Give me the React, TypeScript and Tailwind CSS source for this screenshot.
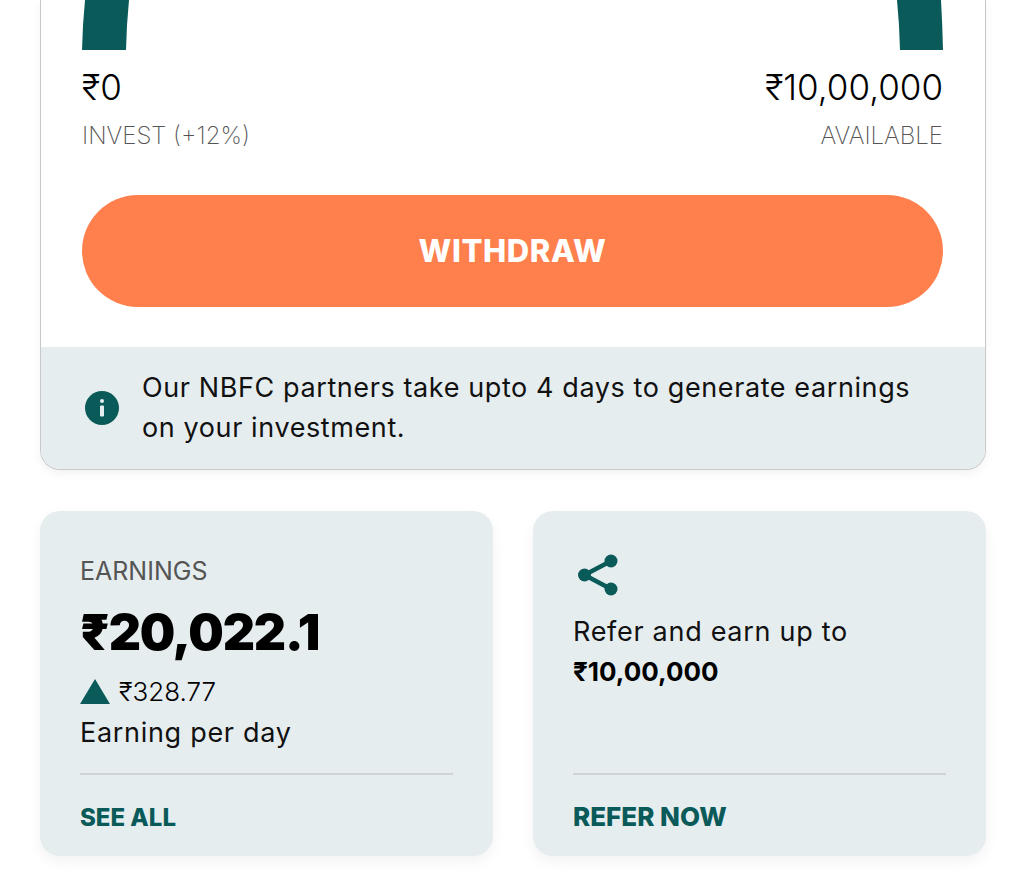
import React from "react";

const teal = "#0b5a5a";

function GaugeEnds() {
  return (
    <svg width="861" height="50" viewBox="0 0 861 50" className="block" aria-hidden="true">
      <path d="M3 0 Q0.6 24 0 50 L44 50 Q44.6 24 47 0 Z" fill={teal} />
      <path d="M815 0 Q817.4 24 818 50 L861 50 Q860.4 24 859 0 Z" fill={teal} />
    </svg>
  );
}

function InfoIcon() {
  return (
    <svg width="34" height="34" viewBox="0 0 34 34" className="shrink-0" aria-hidden="true">
      <circle cx="17" cy="17" r="17" fill={teal} />
      <rect x="15" y="8" width="4" height="4" rx="2" fill="#e6edef" />
      <rect x="15" y="14.5" width="4" height="11" rx="1" fill="#e6edef" />
    </svg>
  );
}

function ShareIcon() {
  return (
    <svg width="40" height="42" viewBox="0 0 40 42" className="block" aria-hidden="true">
      <path d="M33 7 L6.5 21 L33 35" fill="none" stroke={teal} strokeWidth="4.5" />
      <circle cx="33" cy="7" r="6.5" fill={teal} />
      <circle cx="6.5" cy="21" r="6.5" fill={teal} />
      <circle cx="33" cy="35" r="6.5" fill={teal} />
    </svg>
  );
}

export default function App() {
  return (
    <div className="h-[874px] w-[1024px] overflow-hidden bg-white pr-[38px] pl-10 font-['Inter','Noto_Sans',sans-serif] text-black">
      <section className="overflow-hidden rounded-b-[20px] border-x border-b border-[#c9c9cc] bg-white shadow-[0_4px_10px_rgba(0,0,0,0.05)]">
        <div className="pr-[41px] pl-[41px]">
          <GaugeEnds />
          <div className="mt-[15px] flex justify-between pr-px">
            <div>
              <div className="text-[35px] leading-[44px] font-light">₹0</div>
              <div className="mt-[9px] text-[24px] leading-[36px] font-extralight text-[#555]">INVEST (+12%)</div>
            </div>
            <div className="text-right">
              <div className="text-[35px] leading-[44px] font-light">₹10,00,000</div>
              <div className="mt-[9px] text-[24px] leading-[36px] font-extralight text-[#555]">AVAILABLE</div>
            </div>
          </div>
          <button className="mt-[41px] mb-10 flex h-[112px] w-[861px] items-center justify-center rounded-full bg-[#ff7f4d] text-[31px] font-extrabold tracking-[0.6px] text-white">
            WITHDRAW
          </button>
        </div>
        <div className="flex h-[122px] items-center gap-[23px] bg-[#e6edef] pr-[72px] pl-[44px]">
          <InfoIcon />
          <p className="text-[27px] leading-[40px] tracking-[0.6px] text-[#111]">
            Our NBFC partners take upto 4 days to generate earnings on your investment.
          </p>
        </div>
      </section>

      <div className="mt-[41px] grid grid-cols-2 gap-10">
        <div className="flex h-[345px] flex-col rounded-[20px] bg-[#e6edef] px-10 pt-[40px] shadow-[0_6px_14px_rgba(0,0,0,0.05)]">
          <div className="text-[25px] leading-[40px] text-[#555]">EARNINGS</div>
          <div className="mt-[5px] text-[50px] leading-[72px] font-black tracking-[-1.2px]">₹20,022.1</div>
          <div className="mt-[4px] flex items-center gap-[9px] text-[26px] leading-[40px] font-light">
            <svg width="30" height="26" viewBox="0 0 30 26" aria-hidden="true">
              <path d="M15 0 L30 25 L0 25 Z" fill={teal} />
            </svg>
            ₹328.77
          </div>
          <div className="mt-px text-[27px] leading-[40px] tracking-[0.7px] text-[#111]">Earning per day</div>
          <div className="mt-[20px] border-t-2 border-[#cfd3d6]" />
          <div className="mt-[23px] text-[24px] leading-[40px] font-extrabold text-[#0b5a5a]">SEE ALL</div>
        </div>

        <div className="flex h-[345px] flex-col rounded-[20px] bg-[#e6edef] px-10 pt-[43px] shadow-[0_6px_14px_rgba(0,0,0,0.05)]">
          <div className="ml-[5px]">
            <ShareIcon />
          </div>
          <div className="mt-[16px] text-[27px] leading-[40px] tracking-[0.7px] text-[#111]">Refer and earn up to</div>
          <div className="text-[26px] leading-[40px] font-bold">₹10,00,000</div>
          <div className="mt-[81px] border-t-2 border-[#cfd3d6]" />
          <div className="mt-[22px] text-[26px] leading-[40px] font-extrabold text-[#0b5a5a]">REFER NOW</div>
        </div>
      </div>
    </div>
  );
}
